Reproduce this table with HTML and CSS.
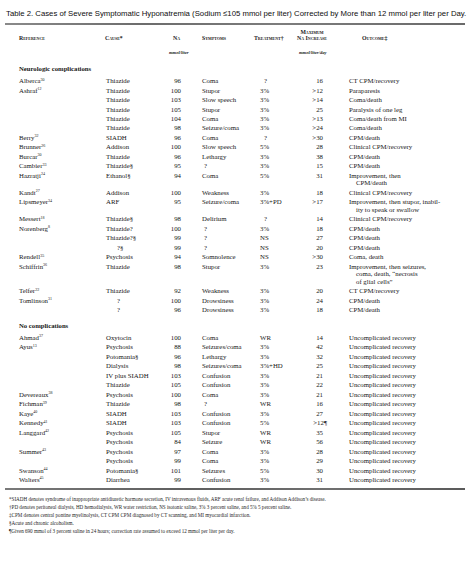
FILE: index.html
```html
<!DOCTYPE html>
<html>
<head>
<meta charset="utf-8">
<link rel="stylesheet" href="styles.css">
</head>
<body>
<div class="page">
  <div class="title">Table 2. Cases of Severe Symptomatic Hyponatremia (Sodium ≤105 mmol per liter) Corrected by More than 12 mmol per liter per Day.</div>
  <div class="rule"></div>
  <table class="tbl">
    <colgroup>
      <col class="c-ref"><col class="c-cause"><col class="c-na"><col class="c-sym"><col class="c-tr"><col class="c-max"><col class="c-out">
    </colgroup>
    <thead>
      <tr class="hrow">
        <th class="h-ref">Reference</th>
        <th class="h-cause">Cause*</th>
        <th class="h-na">Na</th>
        <th class="h-sym">Symptoms</th>
        <th class="h-tr">Treatment†</th>
        <th class="h-max">Maximum<br>Na Increase</th>
        <th class="h-out">Outcome‡</th>
      </tr>
      <tr class="urow">
        <td></td><td></td>
        <td class="u-na">mmol/liter</td>
        <td></td><td></td>
        <td class="u-max">mmol/liter/day</td>
        <td></td>
      </tr>
    </thead>
    <tbody>
      <tr class="sec"><td colspan="7">Neurologic complications</td></tr>
      <tr><td class="ref">Alberca<sup class="sup">30</sup></td><td class="cause">Thiazide</td><td class="na">96</td><td class="sym">Coma</td><td class="tr"><span class="q-tr">?</span></td><td class="max">16</td><td class="out">CT CPM/recovery</td></tr>
      <tr><td class="ref">Ashraf<sup class="sup">12</sup></td><td class="cause">Thiazide</td><td class="na">100</td><td class="sym">Stupor</td><td class="tr">3%</td><td class="max">&gt;12</td><td class="out">Paraparesis</td></tr>
      <tr><td class="ref"></td><td class="cause">Thiazide</td><td class="na">103</td><td class="sym">Slow speech</td><td class="tr">3%</td><td class="max">&gt;14</td><td class="out">Coma/death</td></tr>
      <tr><td class="ref"></td><td class="cause">Thiazide</td><td class="na">105</td><td class="sym">Stupor</td><td class="tr">3%</td><td class="max">25</td><td class="out">Paralysis of one leg</td></tr>
      <tr><td class="ref"></td><td class="cause">Thiazide</td><td class="na">104</td><td class="sym">Coma</td><td class="tr">3%</td><td class="max">&gt;13</td><td class="out">Coma/death from MI</td></tr>
      <tr><td class="ref"></td><td class="cause">Thiazide</td><td class="na">98</td><td class="sym">Seizure/coma</td><td class="tr">3%</td><td class="max">&gt;24</td><td class="out">Coma/death</td></tr>
      <tr><td class="ref">Berry<sup class="sup">32</sup></td><td class="cause">SIADH</td><td class="na">96</td><td class="sym">Coma</td><td class="tr"><span class="q-tr">?</span></td><td class="max">&gt;30</td><td class="out">CPM/death</td></tr>
      <tr><td class="ref">Brunner<sup class="sup">26</sup></td><td class="cause">Addison</td><td class="na">100</td><td class="sym">Slow speech</td><td class="tr">5%</td><td class="max">28</td><td class="out">Clinical CPM/recovery</td></tr>
      <tr><td class="ref">Burcar<sup class="sup">30</sup></td><td class="cause">Thiazide</td><td class="na">96</td><td class="sym">Lethargy</td><td class="tr">3%</td><td class="max">38</td><td class="out">CPM/death</td></tr>
      <tr><td class="ref">Cambier<sup class="sup">33</sup></td><td class="cause">Thiazide§</td><td class="na">95</td><td class="sym"><span class="q-sym">?</span></td><td class="tr">3%</td><td class="max">15</td><td class="out">CPM/death</td></tr>
      <tr><td class="ref">Hazratji<sup class="sup">24</sup></td><td class="cause">Ethanol§</td><td class="na">94</td><td class="sym">Coma</td><td class="tr">5%</td><td class="max">31</td><td class="out">Improvement, then<br>CPM/death</td></tr>
      <tr><td class="ref">Kandt<sup class="sup">27</sup></td><td class="cause">Addison</td><td class="na">100</td><td class="sym">Weakness</td><td class="tr">3%</td><td class="max">18</td><td class="out">Clinical CPM/recovery</td></tr>
      <tr><td class="ref">Lipsmeyer<sup class="sup">34</sup></td><td class="cause">ARF</td><td class="na">95</td><td class="sym">Seizure/coma</td><td class="tr">3%+PD</td><td class="max">&gt;17</td><td class="out">Improvement, then stupor, inabil-<br>ity to speak or swallow</td></tr>
      <tr><td class="ref">Messert<sup class="sup">18</sup></td><td class="cause">Thiazide§</td><td class="na">98</td><td class="sym">Delirium</td><td class="tr"><span class="q-tr">?</span></td><td class="max">14</td><td class="out">Clinical CPM/recovery</td></tr>
      <tr><td class="ref">Norenberg<sup class="sup">8</sup></td><td class="cause">Thiazide?</td><td class="na">100</td><td class="sym"><span class="q-sym">?</span></td><td class="tr">3%</td><td class="max">18</td><td class="out">CPM/death</td></tr>
      <tr><td class="ref"></td><td class="cause">Thiazide?§</td><td class="na">99</td><td class="sym"><span class="q-sym">?</span></td><td class="tr">NS</td><td class="max">27</td><td class="out">CPM/death</td></tr>
      <tr><td class="ref"></td><td class="cause"><span class="q-cause">?§</span></td><td class="na">99</td><td class="sym"><span class="q-sym">?</span></td><td class="tr">NS</td><td class="max">20</td><td class="out">CPM/death</td></tr>
      <tr><td class="ref">Rendell<sup class="sup">35</sup></td><td class="cause">Psychosis</td><td class="na">94</td><td class="sym">Somnolence</td><td class="tr">NS</td><td class="max">&gt;30</td><td class="out">Coma, death</td></tr>
      <tr><td class="ref">Schiffrin<sup class="sup">36</sup></td><td class="cause">Thiazide</td><td class="na">98</td><td class="sym">Stupor</td><td class="tr">3%</td><td class="max">23</td><td class="out">Improvement, then seizures,<br>coma, death, “necrosis<br>of glial cells”</td></tr>
      <tr><td class="ref">Telfer<sup class="sup">22</sup></td><td class="cause">Thiazide</td><td class="na">92</td><td class="sym">Weakness</td><td class="tr">3%</td><td class="max">20</td><td class="out">CT CPM/recovery</td></tr>
      <tr><td class="ref">Tomlinson<sup class="sup">31</sup></td><td class="cause"><span class="q-cause">?</span></td><td class="na">100</td><td class="sym">Drowsiness</td><td class="tr">3%</td><td class="max">24</td><td class="out">CPM/death</td></tr>
      <tr><td class="ref"></td><td class="cause"><span class="q-cause">?</span></td><td class="na">96</td><td class="sym">Drowsiness</td><td class="tr">3%</td><td class="max">18</td><td class="out">CPM/death</td></tr>

      <tr class="sec"><td colspan="7">No complications</td></tr>
      <tr><td class="ref">Ahmad<sup class="sup">37</sup></td><td class="cause">Oxytocin</td><td class="na">100</td><td class="sym">Coma</td><td class="tr">WR</td><td class="max">14</td><td class="out">Uncomplicated recovery</td></tr>
      <tr><td class="ref">Ayus<sup class="sup">13</sup></td><td class="cause">Psychosis</td><td class="na">88</td><td class="sym">Seizures/coma</td><td class="tr">3%</td><td class="max">42</td><td class="out">Uncomplicated recovery</td></tr>
      <tr><td class="ref"></td><td class="cause">Potomania§</td><td class="na">96</td><td class="sym">Lethargy</td><td class="tr">3%</td><td class="max">32</td><td class="out">Uncomplicated recovery</td></tr>
      <tr><td class="ref"></td><td class="cause">Dialysis</td><td class="na">98</td><td class="sym">Seizures/coma</td><td class="tr">3%+HD</td><td class="max">25</td><td class="out">Uncomplicated recovery</td></tr>
      <tr><td class="ref"></td><td class="cause">IV plus SIADH</td><td class="na">103</td><td class="sym">Confusion</td><td class="tr">3%</td><td class="max">21</td><td class="out">Uncomplicated recovery</td></tr>
      <tr><td class="ref"></td><td class="cause">Thiazide</td><td class="na">105</td><td class="sym">Confusion</td><td class="tr">3%</td><td class="max">22</td><td class="out">Uncomplicated recovery</td></tr>
      <tr><td class="ref">Devereaux<sup class="sup">38</sup></td><td class="cause">Psychosis</td><td class="na">100</td><td class="sym">Coma</td><td class="tr">3%</td><td class="max">21</td><td class="out">Uncomplicated recovery</td></tr>
      <tr><td class="ref">Fichman<sup class="sup">39</sup></td><td class="cause">Thiazide</td><td class="na">98</td><td class="sym"><span class="q-sym">?</span></td><td class="tr">WR</td><td class="max">16</td><td class="out">Uncomplicated recovery</td></tr>
      <tr><td class="ref">Kaye<sup class="sup">40</sup></td><td class="cause">SIADH</td><td class="na">103</td><td class="sym">Confusion</td><td class="tr">3%</td><td class="max">27</td><td class="out">Uncomplicated recovery</td></tr>
      <tr><td class="ref">Kennedy<sup class="sup">41</sup></td><td class="cause">SIADH</td><td class="na">103</td><td class="sym">Confusion</td><td class="tr">5%</td><td class="max">&gt;12<span class="hang">¶</span></td><td class="out">Uncomplicated recovery</td></tr>
      <tr><td class="ref">Langgard<sup class="sup">42</sup></td><td class="cause">Psychosis</td><td class="na">105</td><td class="sym">Stupor</td><td class="tr">WR</td><td class="max">35</td><td class="out">Uncomplicated recovery</td></tr>
      <tr><td class="ref"></td><td class="cause">Psychosis</td><td class="na">84</td><td class="sym">Seizure</td><td class="tr">WR</td><td class="max">56</td><td class="out">Uncomplicated recovery</td></tr>
      <tr><td class="ref">Summer<sup class="sup">43</sup></td><td class="cause">Psychosis</td><td class="na">97</td><td class="sym">Coma</td><td class="tr">3%</td><td class="max">28</td><td class="out">Uncomplicated recovery</td></tr>
      <tr><td class="ref"></td><td class="cause">Psychosis</td><td class="na">99</td><td class="sym">Coma</td><td class="tr">3%</td><td class="max">29</td><td class="out">Uncomplicated recovery</td></tr>
      <tr><td class="ref">Swanson<sup class="sup">44</sup></td><td class="cause">Potomania§</td><td class="na">101</td><td class="sym">Seizures</td><td class="tr">5%</td><td class="max">30</td><td class="out">Uncomplicated recovery</td></tr>
      <tr><td class="ref">Walters<sup class="sup">45</sup></td><td class="cause">Diarrhea</td><td class="na">99</td><td class="sym">Confusion</td><td class="tr">3%</td><td class="max">31</td><td class="out">Uncomplicated recovery</td></tr>
    </tbody>
  </table>
  <div class="rule rule-bottom"></div>
  <div class="notes">
    <p class="note">*SIADH denotes syndrome of inappropriate antidiuretic hormone secretion, IV intravenous fluids, ARF acute renal failure, and Addison Addison’s disease.</p>
    <p class="note">†PD denotes peritoneal dialysis, HD hemodialysis, WR water restriction, NS isotonic saline, 3% 3 percent saline, and 5% 5 percent saline.</p>
    <p class="note">‡CPM denotes central pontine myelinolysis, CT CPM CPM diagnosed by CT scanning, and MI myocardial infarction.</p>
    <p class="note">§Acute and chronic alcoholism.</p>
    <p class="note">¶Given 690 mmol of 3 percent saline in 24 hours; correction rate assumed to exceed 12 mmol per liter per day.</p>
  </div>
</div>
</body>
</html>
```

FILE: styles.css
```css
html, body {
  margin: 0;
  padding: 0;
  background: #ffffff;
}
body {
  color: #161616;
  font-family: "Liberation Serif", "Times New Roman", serif;
}
.page {
  width: 460px;
  padding-left: 5px;
}
.title {
  font-family: "Liberation Sans", Arial, sans-serif;
  font-size: 7.75px;
  line-height: 9px;
  padding-top: 9px;
  padding-left: 1px;
  white-space: nowrap;
  color: #0e0e0e;
}
.rule {
  height: 2px;
  margin-top: 4.5px;
  background: linear-gradient(90deg, #8a8a8a, #6c6c6c 30%, #7d7d7d 60%, #6a6a6a);
}
.rule-bottom {
  margin-top: 3.5px;
  background: linear-gradient(90deg, #7a7a7a, #5e5e5e 40%, #707070 70%, #5a5a5a);
}
.tbl {
  width: 460px;
  table-layout: fixed;
  border-collapse: collapse;
  border-spacing: 0;
}
.c-ref { width: 95px; }
.c-cause { width: 65px; }
.c-na { width: 20px; }
.c-sym { width: 67px; }
.c-tr { width: 40px; }
.c-max { width: 40px; }
.c-out { width: 133px; }

.tbl td, .tbl th {
  padding: 0;
  white-space: nowrap;
  overflow: visible;
}
.hrow th {
  font-size: 5.8px;
  line-height: 6px;
  font-weight: bold;
  font-variant: small-caps;
  vertical-align: bottom;
  padding-top: 4.5px;
  text-align: left;
  color: #222;
}
.h-ref { padding-left: 14px !important; }
.h-cause { padding-left: 5px !important; }
.h-na { text-align: center !important; padding-left: 3px !important; }
.h-sym { padding-left: 17px !important; }
.h-tr { padding-left: 2px !important; }
.h-max { text-align: center !important; }
.h-out { padding-left: 30px !important; }

.urow td {
  font-size: 4.6px;
  line-height: 6px;
  font-style: italic;
  font-weight: bold;
  padding-top: 9px;
  padding-bottom: 2px;
  color: #222;
}
.u-na { padding-left: 4px !important; }
.u-max { padding-left: 7px !important; }

.sec td {
  font-size: 6.7px;
  line-height: 7.6px;
  font-weight: bold;
  padding: 7.15px 0 3.45px 14px;
}
.tbl tbody tr:not(.sec) td {
  font-size: 6.8px;
  line-height: 7.6px;
  padding-top: 0.95px;
  padding-bottom: 0.95px;
  vertical-align: top;
}
.tbl td.ref { padding-left: 14px; }
.tbl td.cause { padding-left: 6px; }
.tbl td.na { text-align: right; padding-right: 4px; }
.tbl td.sym { padding-left: 17px; }
.tbl td.tr { padding-left: 8px; }
.tbl td.max { text-align: right; padding-right: 9px; }
.tbl td.out { padding-left: 24px; text-indent: -7px; }

.q-tr { padding-left: 4px; }
.q-sym { padding-left: 2px; }
.q-cause { padding-left: 11px; }
.hang { margin-right: -4px; }

.sup {
  font-size: 4px;
  line-height: 0;
  vertical-align: baseline;
  position: relative;
  top: -2.6px;
}

.notes {
  padding-top: 5px;
  padding-left: 4px;
}
.note {
  margin: 0;
  font-size: 5.1px;
  line-height: 8px;
  white-space: nowrap;
  color: #1e1e1e;
}
```
